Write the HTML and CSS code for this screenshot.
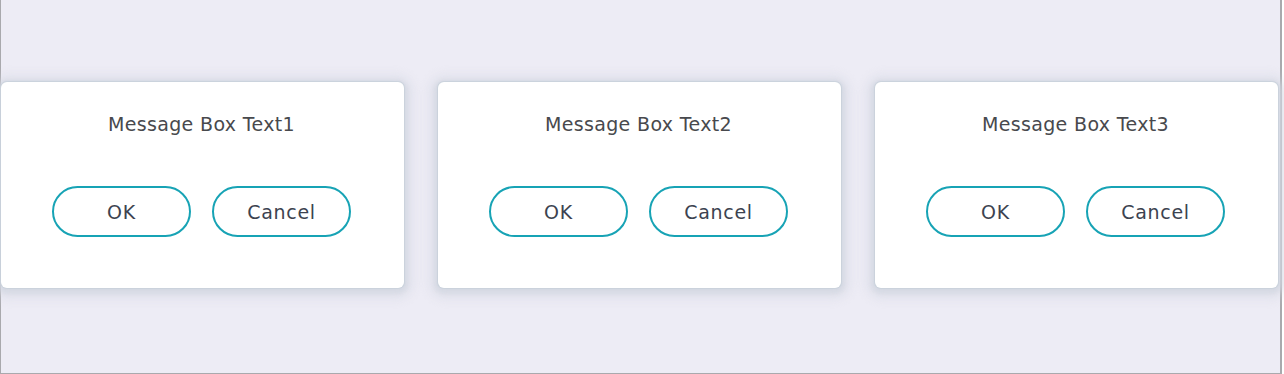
FILE: index.html
```html
<!DOCTYPE html>
<html>
<head>
<meta charset="utf-8">
<link rel="stylesheet" href="styles.css">
</head>
<body>
<div class="frame">
  <div class="row">
    <div class="card">
      <div class="title">Message Box Text1</div>
      <div class="actions">
        <button class="btn">OK</button>
        <button class="btn">Cancel</button>
      </div>
    </div>
    <div class="card">
      <div class="title">Message Box Text2</div>
      <div class="actions">
        <button class="btn">OK</button>
        <button class="btn">Cancel</button>
      </div>
    </div>
    <div class="card">
      <div class="title">Message Box Text3</div>
      <div class="actions">
        <button class="btn">OK</button>
        <button class="btn">Cancel</button>
      </div>
    </div>
  </div>
</div>
</body>
</html>
```

FILE: styles.css
```css
html, body {
  margin: 0;
  padding: 0;
  background: #ffffff;
}
.frame {
  box-sizing: border-box;
  width: 1282px;
  height: 374px;
  background: #edecf5;
  border-left: 1px solid #a9a9ad;
  border-right: 2px solid #a9a9ad;
  border-bottom: 1px solid #a9a9ad;
  padding-top: 82px;
  font-family: "DejaVu Sans", sans-serif;
}
.row {
  display: flex;
  gap: 34px;
}
.card {
  box-sizing: border-box;
  width: 403px;
  height: 206px;
  background: #ffffff;
  border-radius: 6px;
  box-shadow: 0 0 1px 1px rgba(200, 208, 218, 0.9), 0 2px 4px 4px rgba(208, 213, 224, 0.6), 0 2px 12px 8px rgba(215, 216, 228, 0.6);
  display: flex;
  flex-direction: column;
  align-items: center;
  padding-top: 30px;
  padding-right: 2px;
}
.title {
  font-size: 19px;
  line-height: 24px;
  letter-spacing: 0.35px;
  color: #48494d;
}
.actions {
  margin-top: 50px;
  display: flex;
  gap: 21px;
}
.btn {
  box-sizing: border-box;
  width: 139px;
  height: 51px;
  border: 2.5px solid #17a3b5;
  border-radius: 26px;
  background: #ffffff;
  color: #3c4350;
  font-family: "DejaVu Sans", sans-serif;
  font-size: 19px;
  letter-spacing: 0.7px;
  padding: 0;
}
```
